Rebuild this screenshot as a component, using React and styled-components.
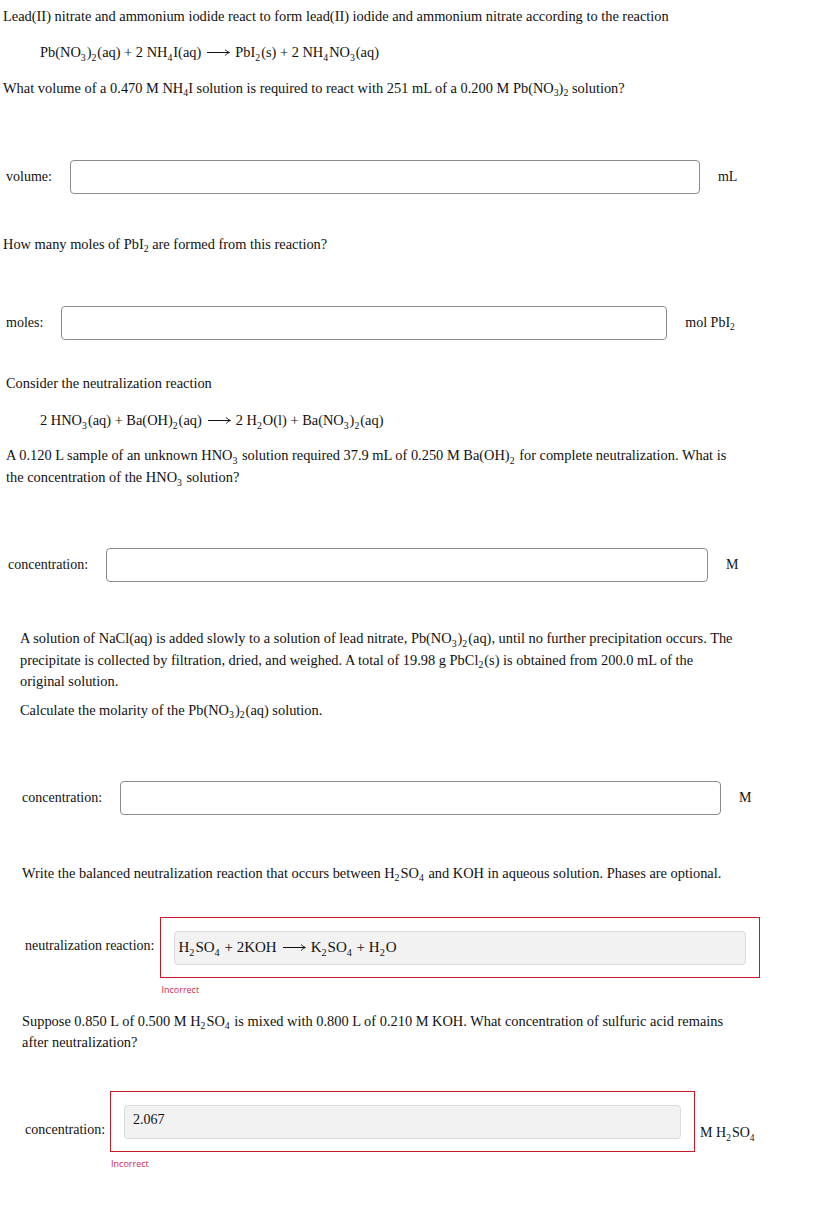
import React from 'react'
import styled, { createGlobalStyle } from 'styled-components'

const GlobalStyle = createGlobalStyle`
  html, body {
    margin: 0;
    padding: 0;
    background: #fff;
  }
  body {
    font-family: "Liberation Serif", "Times New Roman", serif;
    font-size: 14.4px;
    color: #111;
  }
`

const Page = styled.div`
  width: 822px;
  padding: 6px 0 40px;
  box-sizing: border-box;
`

const Text = styled.p`
  margin: ${p => p.$top || 0}px 0 0 ${p => p.$left || 3}px;
  line-height: ${p => p.$lh || 21}px;
  width: ${p => p.$width || 760}px;
`

const Equation = styled.div`
  margin: ${p => p.$top || 0}px 0 0 40px;
  line-height: 21px;
  white-space: nowrap;
`

const Sub = styled.sub`
  font-size: 0.68em;
  line-height: 0;
  vertical-align: ${p => (p.$eq ? '-0.4em' : '-0.28em')};
  margin-right: ${p => (p.$eq ? '1px' : '0')};
`

const ArrowSvg = styled.svg`
  display: inline-block;
  width: 23px;
  height: 8px;
  margin: 0 5px 0 6px;
  vertical-align: 1px;
`

const Arrow = () => (
  <ArrowSvg viewBox="0 0 23 8">
    <path d="M0 4.5H21.5" stroke="#111" strokeWidth="1" fill="none" />
    <path d="M18 1.5Q20 3.8 22.6 4.5Q20 5.2 18 7.5" stroke="#111" strokeWidth="0.9" fill="none" />
  </ArrowSvg>
)

const Row = styled.div`
  display: flex;
  align-items: center;
  gap: 18px;
  margin: ${p => p.$top || 0}px 0 0 ${p => p.$left || 6}px;
`

const Label = styled.span`
  font-size: 14px;
  white-space: nowrap;
`

const Field = styled.div`
  width: ${p => p.$width}px;
  height: 34px;
  box-sizing: border-box;
  border: 1px solid #8c8c8c;
  border-radius: 4px;
  background: #fff;
`

const Unit = styled.span`
  font-size: 14px;
  white-space: nowrap;
`

const ErrorRow = styled.div`
  display: flex;
  align-items: ${p => p.$align || 'flex-start'};
  gap: ${p => p.$gap || 4}px;
  margin: ${p => p.$top || 0}px 0 0 25px;
`

const ErrorLabel = styled.span`
  font-size: 14px;
  white-space: nowrap;
  padding-top: ${p => p.$pad || 0}px;
`

const ErrorColumn = styled.div`
  display: flex;
  flex-direction: column;
`

const ErrorBox = styled.div`
  width: ${p => p.$width}px;
  box-sizing: border-box;
  border: 1px solid #c8192b;
  padding: 13px 13px 12px;
`

const FilledField = styled.div`
  height: 34px;
  box-sizing: border-box;
  border: 1px solid #dadada;
  border-radius: 4px;
  background: #f2f2f2;
  padding: ${p => p.$pad || '0 4px'};
  font-size: ${p => p.$size || 15}px;
  line-height: ${p => p.$lh || 30}px;
  white-space: nowrap;
`

const Incorrect = styled.span`
  font-family: "Open Sans", "Liberation Sans", sans-serif;
  font-size: 9px;
  line-height: 12px;
  color: #d02846;
  margin-top: 6px;
  padding-left: 1px;
`

const ErrorUnit = styled.span`
  font-size: 14px;
  white-space: nowrap;
  padding-top: ${p => p.$pad || 0}px;
`

export default function App() {
  return (
    <Page>
      <GlobalStyle />
      <Text>
        Lead(II) nitrate and ammonium iodide react to form lead(II) iodide and ammonium nitrate according to the reaction
      </Text>
      <Equation $top={15}>
        Pb(NO<Sub $eq>3</Sub>)<Sub $eq>2</Sub>(aq) + 2 NH<Sub $eq>4</Sub>I(aq)<Arrow />PbI<Sub $eq>2</Sub>(s) + 2 NH<Sub $eq>4</Sub>NO<Sub $eq>3</Sub>(aq)
      </Equation>
      <Text $top={15}>
        What volume of a 0.470 M NH<Sub>4</Sub>I solution is required to react with 251 mL of a 0.200 M Pb(NO<Sub>3</Sub>)<Sub>2</Sub> solution?
      </Text>

      <Row $top={61}>
        <Label>volume:</Label>
        <Field $width={630} />
        <Unit>mL</Unit>
      </Row>

      <Text $top={40}>How many moles of PbI<Sub>2</Sub> are formed from this reaction?</Text>

      <Row $top={51}>
        <Label>moles:</Label>
        <Field $width={606} />
        <Unit>
          mol PbI<Sub>2</Sub>
        </Unit>
      </Row>

      <Text $top={33} $left={6}>Consider the neutralization reaction</Text>
      <Equation $top={16}>
        2 HNO<Sub $eq>3</Sub>(aq) + Ba(OH)<Sub $eq>2</Sub>(aq)<Arrow />2 H<Sub $eq>2</Sub>O(l) + Ba(NO<Sub $eq>3</Sub>)<Sub $eq>2</Sub>(aq)
      </Equation>
      <Text $top={13} $left={6} $lh={22} $width={740}>
        A 0.120 L sample of an unknown HNO<Sub $eq>3</Sub> solution required 37.9 mL of 0.250 M Ba(OH)<Sub $eq>2</Sub> for complete neutralization. What is the concentration of the HNO<Sub $eq>3</Sub> solution?
      </Text>

      <Row $top={60} $left={8}>
        <Label>concentration:</Label>
        <Field $width={602} />
        <Unit>M</Unit>
      </Row>

      <Text $top={46} $left={20} $lh={21.5} $width={720}>
        A solution of NaCl(aq) is added slowly to a solution of lead nitrate, Pb(NO<Sub $eq>3</Sub>)<Sub $eq>2</Sub>(aq), until no further precipitation occurs. The precipitate is collected by filtration, dried, and weighed. A total of 19.98 g PbCl<Sub $eq>2</Sub>(s) is obtained from 200.0 mL of the original solution.
      </Text>
      <Text $top={7} $left={20}>
        Calculate the molarity of the Pb(NO<Sub $eq>3</Sub>)<Sub $eq>2</Sub>(aq) solution.
      </Text>

      <Row $top={60} $left={22}>
        <Label>concentration:</Label>
        <Field $width={601} />
        <Unit>M</Unit>
      </Row>

      <Text $top={48} $left={22}>
        Write the balanced neutralization reaction that occurs between H<Sub $eq>2</Sub>SO<Sub $eq>4</Sub> and KOH in aqueous solution. Phases are optional.
      </Text>

      <ErrorRow $top={33} $gap={6}>
        <ErrorLabel $pad={21}>neutralization reaction:</ErrorLabel>
        <ErrorColumn>
          <ErrorBox $width={600}>
            <FilledField $pad="0 3px">
              H<Sub $eq>2</Sub>SO<Sub $eq>4</Sub> + 2KOH<Arrow />K<Sub $eq>2</Sub>SO<Sub $eq>4</Sub> + H<Sub $eq>2</Sub>O
            </FilledField>
          </ErrorBox>
          <Incorrect>Incorrect</Incorrect>
        </ErrorColumn>
      </ErrorRow>

      <Text $top={15} $left={22} $width={720}>
        Suppose 0.850 L of 0.500 M H<Sub $eq>2</Sub>SO<Sub $eq>4</Sub> is mixed with 0.800 L of 0.210 M KOH. What concentration of sulfuric acid remains after neutralization?
      </Text>

      <ErrorRow $top={38} $align="center" $gap={5}>
        <ErrorLabel $pad={0}>concentration:</ErrorLabel>
        <ErrorColumn>
          <ErrorBox $width={585}>
            <FilledField $pad="0 8px" $size={14} $lh={28}>2.067</FilledField>
          </ErrorBox>
          <Incorrect>Incorrect</Incorrect>
        </ErrorColumn>
        <ErrorUnit $pad={6}>
          M H<Sub $eq>2</Sub>SO<Sub $eq>4</Sub>
        </ErrorUnit>
      </ErrorRow>
    </Page>
  )
}
